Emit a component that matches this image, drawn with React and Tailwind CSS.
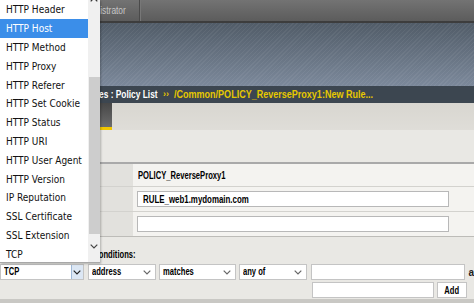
const ITEMS = [
    'HTTP Header', 'HTTP Host', 'HTTP Method', 'HTTP Proxy', 'HTTP Referer',
    'HTTP Set Cookie', 'HTTP Status', 'HTTP URI', 'HTTP User Agent', 'HTTP Version',
    'IP Reputation', 'SSL Certificate', 'SSL Extension', 'TCP'
];

const Chevron = ({ className, up }) => (
    <svg width="8" height="5" viewBox="0 0 8 5" className={className}>
        <path d={up ? 'M0.7 4.3 L4 1 L7.3 4.3' : 'M0.7 0.7 L4 4 L7.3 0.7'} fill="none" stroke="currentColor" strokeWidth="1.2" />
    </svg>
);

// the page font is a condensed bold, squeeze Liberation Sans to match
const Narrow = ({ children, className = '' }) => (
    <span className={`inline-block whitespace-nowrap scale-x-[0.76] ${className || 'origin-left'}`}>{children}</span>
);

const Select = ({ label, width, ml }) => (
    <div className={`${width} ${ml} h-[16px] bg-white border border-[#c4c4c4] flex items-center justify-between pl-[3px] pr-[4px]`}>
        <Narrow className="origin-left text-[10px] font-bold text-black leading-none">{label}</Narrow>
        <Chevron className="text-[#666]" />
    </div>
);

const Dropdown = () => (
    <div className="absolute left-0 top-0 w-[100px] h-[263px] flex bg-white border-b border-[#a8a8a8] shadow-[1px_1px_2px_rgba(0,0,0,0.25)] font-['DejaVu_Sans_Condensed','DejaVu_Sans',sans-serif]">
        <div className="w-[88px] flex flex-col pt-[0.5px]">
            {ITEMS.map(item => (
                <div key={item} className={`h-[18.8px] shrink-0 flex items-center pl-[6px] text-[10px] whitespace-nowrap ${item === 'HTTP Host' ? 'bg-[#3b8ee9] text-white' : 'text-[#111]'}`}>
                    {item}
                </div>
            ))}
        </div>
        <div className="w-[12px] flex flex-col bg-[#f0f0f0]">
            <div className="h-[80px] flex justify-center -mt-[3px]">
                <Chevron up className="text-[#333]" />
            </div>
            <div className="h-[157px] bg-[#cdcdcd] mx-[0.5px]" />
            <div className="flex-1 flex items-center justify-center pb-[3px]">
                <Chevron className="text-[#444]" />
            </div>
        </div>
    </div>
);

export default function App() {
    return (
        <div className="relative w-[474px] h-[303px] overflow-hidden bg-[#e9e8e4] font-['Liberation_Sans',Arial,sans-serif]">
            {/* top bar */}
            <div className="h-[23px] flex bg-gradient-to-b from-[#737373] to-[#5c5c5c] border-b-2 border-[#3d3d3d]">
                <div className="w-[140px] flex items-center justify-end pr-[13px] text-[11px] text-[#c6c6c6] border-r border-[#4a4a4a] whitespace-nowrap">
                    <Narrow className="origin-right">Administrator</Narrow>
                </div>
                <div className="flex-1 border-l border-[#777]" />
            </div>

            {/* banner */}
            <div className="h-[63px] bg-[repeating-linear-gradient(135deg,rgba(255,255,255,0.05)_0px,rgba(255,255,255,0.05)_1px,transparent_1px,transparent_3px),linear-gradient(to_bottom,#515c68,#7c899b)]" />

            {/* breadcrumb */}
            <div className="h-[17px] flex items-center bg-[#3c4650] text-[11px] font-bold whitespace-nowrap">
                <div className="w-[158px] shrink-0 flex justify-end overflow-hidden text-white">
                    <Narrow className="origin-right scale-x-[0.8]">Local Traffic ›› Policies : Policy List</Narrow>
                </div>
                <span className="ml-[5px] text-[#e3c400] text-[9px]">››</span>
                <span className="ml-[5px] text-[#e6c800]">
                    <Narrow className="origin-left scale-x-[0.82]">/Common/POLICY_ReverseProxy1:New Rule...</Narrow>
                </span>
            </div>

            {/* tab band */}
            <div className="h-[27px] flex bg-gradient-to-b from-[#d8d6d0] to-[#dfddd8]">
                <div className="ml-[80px] w-[32px] bg-gradient-to-b from-[#474747] to-[#6c6c6c] border-b-[3px] border-[#f2c700]" />
            </div>
            <div className="h-[32px] bg-[#e9e8e4]" />
            <div className="h-[2px] bg-[#a9a9a9]" />

            {/* properties */}
            <div className="grid grid-cols-[133px_1fr] bg-[#f4f3f0]">
                <div className="h-[23px] bg-[#e2e1dd] border-b border-[#d3d2ce]" />
                <div className="h-[23px] flex items-center pl-[5px] border-b border-[#d3d2ce] text-[10px] font-bold text-black">
                    <Narrow>POLICY_ReverseProxy1</Narrow>
                </div>
                <div className="h-[25px] bg-[#e2e1dd] border-b border-[#d3d2ce]" />
                <div className="h-[25px] flex items-center pl-[4px] border-b border-[#d3d2ce]">
                    <div className="w-[312px] h-[16px] bg-white border border-[#b8b8b8] flex items-center pl-[5px] text-[10px] font-bold text-black">
                        <Narrow className="origin-left scale-x-[0.79]">RULE_web1.mydomain.com</Narrow>
                    </div>
                </div>
                <div className="h-[25px] bg-[#e2e1dd] border-b border-[#bdbcb8]" />
                <div className="h-[25px] flex items-center pl-[4px] border-b border-[#bdbcb8]">
                    <div className="w-[312px] h-[16px] bg-white border border-[#b8b8b8]" />
                </div>
            </div>

            {/* conditions */}
            <div className="h-[27px] flex items-end pb-[4px]">
                <div className="w-[136px] flex justify-end overflow-hidden text-[10px] font-bold text-black leading-none">
                    <Narrow className="origin-right">Conditions:</Narrow>
                </div>
            </div>
            <div className="flex items-center h-[16px]">
                <div className="w-[84px] h-[16px] bg-white border border-[#c4c4c4] flex items-center justify-between pl-[3px]">
                    <Narrow className="origin-left text-[10px] font-bold text-black leading-none">TCP</Narrow>
                    <div className="w-[12px] h-full bg-[#dce7f4] border-l border-[#9fb9d8] flex items-center justify-center">
                        <Chevron className="text-[#222]" />
                    </div>
                </div>
                <Select label="address" width="w-[69px]" ml="ml-[4px]" />
                <Select label="matches" width="w-[77px]" ml="ml-[3px]" />
                <Select label="any of" width="w-[68px]" ml="ml-[3px]" />
                <div className="ml-[4px] w-[155px] h-[16px] bg-white border border-[#c4c4c4]" />
                <span className="ml-[3px] text-[10px] font-bold text-[#222]">a</span>
            </div>
            <div className="mt-[2px] flex items-center h-[16px]">
                <div className="ml-[312px] w-[122px] h-[16px] bg-white border border-[#c4c4c4]" />
                <div className="ml-[3px] w-[30px] h-[16px] bg-white border border-[#c4c4c4] flex items-center justify-center text-[10px] font-bold text-black">
                    <Narrow className="origin-center">Add</Narrow>
                </div>
            </div>
            <div className="mt-[1px] h-[4px] bg-[#c9c8c4]" />

            <Dropdown />
        </div>
    );
}
